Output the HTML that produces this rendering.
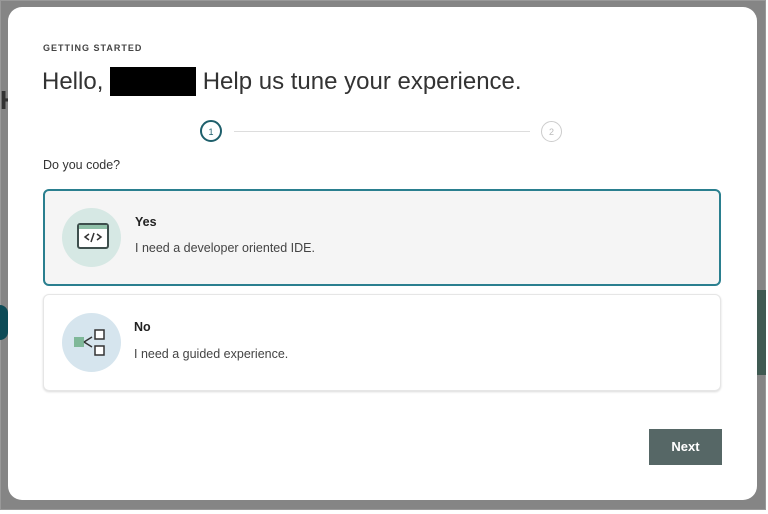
<!DOCTYPE html>
<html><head><style>
body{margin:0;width:768px;height:514px;background:#fff;position:relative;overflow:hidden;font-family:"Liberation Sans",sans-serif}
.back{position:absolute;left:0;top:0;width:766px;height:510px;background:#858585;border:1px solid #999;box-sizing:border-box}
.frag{position:absolute;color:#333;font-size:22px}
.modal{position:absolute;left:8px;top:7px;width:749px;height:493px;background:#fff;border-radius:14px}
.eyebrow{position:absolute;left:35px;top:36px;font-size:9px;font-weight:bold;letter-spacing:1px;color:#444}
h1{position:absolute;left:34px;top:60px;margin:0;font-size:24px;font-weight:normal;color:#333}
.red{display:inline-block;width:86px;height:29px;background:#000;vertical-align:-7px}
.step{position:absolute;width:22px;height:22px;border-radius:50%;box-sizing:border-box;font-size:9px;text-align:center;line-height:20px}
.s1{left:192px;top:113px;border:2px solid #1e5f6b;color:#1e5f6b}
.s2{left:533px;top:114px;width:21px;height:21px;border:1.5px solid #ccc;color:#bbb}
.line{position:absolute;left:226px;top:124px;width:296px;height:1px;background:#ddd}
.q{position:absolute;left:35px;top:151px;font-size:12.5px;color:#333}
.card{position:absolute;left:35px;width:678px;border-radius:6px;box-sizing:border-box}
.c1{top:182px;height:97px;background:#f5f5f5;border:2px solid #2a7f8f}
.c2{top:287px;height:97px;background:#fff;border:1px solid #e6e6e6;box-shadow:0 1px 2px rgba(0,0,0,.15)}
.ic{position:absolute;left:18px;top:18px;width:59px;height:59px;border-radius:50%}
.t{position:absolute;left:90px;font-size:12.5px;color:#222}
.btn{position:absolute;left:641px;top:422px;width:73px;height:36px;background:#566766;color:#fff;font-weight:bold;font-size:13px;text-align:center;line-height:36px}
</style></head><body>
<div class="back"></div>
<div class="frag" style="left:0;top:85px;font-weight:bold;font-size:26px">H</div>
<div style="position:absolute;left:0;top:305px;width:8px;height:35px;background:#0d4b57;border-radius:0 10px 10px 0"></div>
<div style="position:absolute;left:757px;top:290px;width:9px;height:85px;background:#3f5a52"></div>
<div class="modal">
<div class="eyebrow">GETTING STARTED</div>
<h1>Hello, <span class="red"></span> Help us tune your experience.</h1>
<div class="step s1">1</div><div class="line"></div><div class="step s2">2</div>
<div class="q">Do you code?</div>
<div class="card c1">
<div class="ic" style="background:#d6e8e4;left:17px;top:17px">
<svg width="59" height="59" viewBox="0 0 59 59"><rect x="16" y="16" width="30" height="24" rx="2" fill="#fff" stroke="#3e4f4d" stroke-width="2"/><rect x="17" y="17" width="28" height="4" fill="#8fc0a8"/><path d="M27 26l-4 3 4 3M35 26l4 3-4 3M32 25l-3 9" fill="none" stroke="#333" stroke-width="1.5"/></svg></div>
<div class="t" style="top:24px;font-weight:bold">Yes</div>
<div class="t" style="top:50px;color:#444">I need a developer oriented IDE.</div>
</div>
<div class="card c2">
<div class="ic" style="background:#d6e5ee">
<svg width="59" height="59" viewBox="0 0 59 59"><rect x="12" y="24" width="10" height="10" fill="#7fb899"/><path d="M22 29l8-5M22 29l8 5" stroke="#333" stroke-width="1.5"/><rect x="33" y="17" width="9" height="9" fill="#fff" stroke="#333" stroke-width="1.5"/><rect x="33" y="33" width="9" height="9" fill="#fff" stroke="#333" stroke-width="1.5"/></svg></div>
<div class="t" style="top:25px;font-weight:bold">No</div>
<div class="t" style="top:52px;color:#444">I need a guided experience.</div>
</div>
<div class="btn">Next</div>
</div>
</body></html>
